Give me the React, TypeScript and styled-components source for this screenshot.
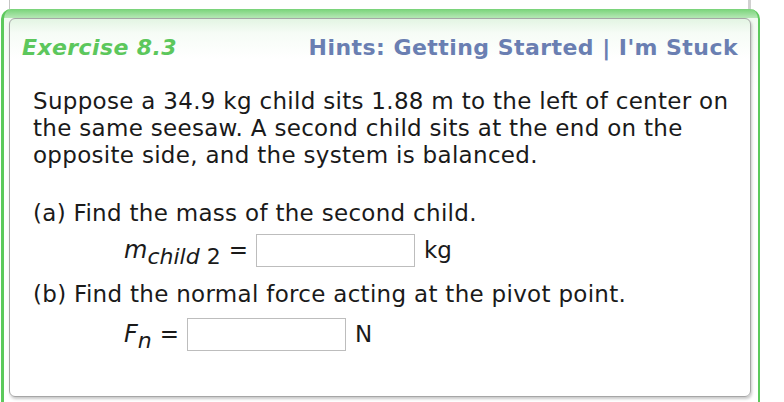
import React from 'react';
import styled, { createGlobalStyle } from 'styled-components';

const Global = createGlobalStyle`
  html, body { margin: 0; padding: 0; background: #fff; }
  body {
    width: 784px;
    height: 402px;
    overflow: hidden;
    font-family: "DejaVu Sans", Verdana, sans-serif;
    color: #1a1a1a;
  }
`;

const TopStub = styled.div`
  margin-left: 9px;
  width: 738px;
  height: 9px;
  border-left: 1px solid #c4c4c4;
  border-right: 3px solid #d0d0d0;
`;

const Frame = styled.div`
  box-sizing: border-box;
  margin-left: 1px;
  width: 759px;
  height: 393px;
  border-left: 3px solid #5cc95c;
  border-right: 2px solid #5cc95c;
  border-top-left-radius: 10px;
  border-top-right-radius: 10px;
  padding: 9px 7px 5px 5px;
  background:
    linear-gradient(#78d378 0px, #b6e8b6 9px, #f0faf0 9px, #ffffff 80px);
`;

const Card = styled.div`
  box-sizing: border-box;
  height: 379px;
  border: 1px solid #a6a6a6;
  border-radius: 6px;
  box-shadow: 1px 2px 3px rgba(0, 0, 0, 0.22);
  background: linear-gradient(#e3f5e3 0px, #f6fcf6 14px, #ffffff 40px);
`;

const Header = styled.div`
  display: flex;
  justify-content: space-between;
  align-items: center;
  padding: 16px 12px 0 12px;
  line-height: 26px;
`;

const Title = styled.div`
  font-size: 22px;
  letter-spacing: 0.4px;
  font-weight: bold;
  font-style: italic;
  color: #5cc75c;
`;

const Hints = styled.div`
  font-size: 22px;
  letter-spacing: 0.45px;
  font-weight: bold;
  color: #6a7fb2;
  white-space: nowrap;
`;

const Body = styled.div`
  padding: 0 0 0 23px;
  font-size: 23px;
  letter-spacing: 0.3px;
  line-height: 27px;
`;

const Para = styled.p<{ $top: number }>`
  margin: ${(p) => p.$top}px 0 0 0;
  white-space: nowrap;
`;

const AnswerRow = styled.div<{ $top: number }>`
  display: flex;
  align-items: center;
  height: 34px;
  margin: ${(p) => p.$top}px 0 0 91px;
  letter-spacing: 0;
`;

const Sym = styled.span`
  font-style: italic;
  font-size: 24px;
  white-space: nowrap;
`;

const Sub = styled.span`
  position: relative;
  top: 6px;
  font-size: 22px;
`;

const Upright = styled.span`
  font-style: normal;
`;

const Eq = styled.span`
  margin-left: 8px;
  font-size: 23px;
`;

const Field = styled.input`
  box-sizing: border-box;
  width: 159px;
  height: 33px;
  margin-left: 8px;
  border: 1px solid #bdbdbd;
  background: #fff;
  padding: 0 4px;
  font-size: 16px;
`;

const Unit = styled.span`
  margin-left: 9px;
  font-size: 23px;
`;

export default function App() {
  return (
    <>
      <Global />
      <TopStub />
      <Frame>
        <Card>
          <Header>
            <Title>Exercise 8.3</Title>
            <Hints>Hints: Getting Started | I'm Stuck</Hints>
          </Header>
          <Body>
            <Para $top={27}>
              Suppose a 34.9 kg child sits 1.88 m to the left of center on
              <br />
              the same seesaw. A second child sits at the end on the
              <br />
              opposite side, and the system is balanced.
            </Para>
            <Para $top={31}>(a) Find the mass of the second child.</Para>
            <AnswerRow $top={6}>
              <Sym>
                m
                <Sub>
                  child <Upright>2</Upright>
                </Sub>
              </Sym>
              <Eq>=</Eq>
              <Field type="text" />
              <Unit>kg</Unit>
            </AnswerRow>
            <Para $top={14}>(b) Find the normal force acting at the pivot point.</Para>
            <AnswerRow $top={9}>
              <Sym>
                F<Sub>n</Sub>
              </Sym>
              <Eq>=</Eq>
              <Field type="text" />
              <Unit>N</Unit>
            </AnswerRow>
          </Body>
        </Card>
      </Frame>
    </>
  );
}
